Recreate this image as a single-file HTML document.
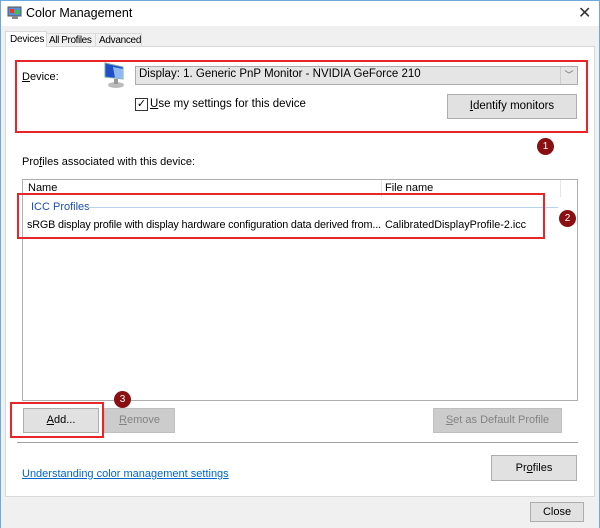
<!DOCTYPE html>
<html><head><style>
*{box-sizing:border-box;margin:0;padding:0}
body{width:600px;height:528px;position:relative;background:#f0f0f0;font-family:"Liberation Sans",sans-serif;font-size:11px;color:#000;overflow:hidden}
.a{position:absolute;white-space:nowrap}
.btn{position:absolute;background:#e1e1e1;border:1px solid #adadad;text-align:center;line-height:22px}
.dis{background:#cccccc;border-color:#bfbfbf;color:#838383}
.red{position:absolute;border:2px solid #e8262a}
.badge{position:absolute;width:17px;height:17px;border-radius:50%;background:#8a0f12;color:#fff;font-size:10px;text-align:center;line-height:17px}
u{text-decoration:underline}
</style></head><body>
<div class="a" style="left:0;top:0;width:600px;height:528px;border:1px solid #6fa8dc;border-bottom:none"></div>
<div class="a" style="left:1px;top:1px;width:598px;height:25px;background:#fff"></div>
<svg class="a" style="left:7px;top:6px" width="16" height="14"><rect x="1" y="1" width="13" height="9" fill="#5a8fd6" stroke="#555"/><rect x="3" y="3" width="4" height="4" fill="#e33"/><rect x="8" y="4" width="4" height="4" fill="#3c3"/><rect x="5" y="10" width="6" height="3" fill="#888"/></svg>
<div class="a" style="left:26px;top:6px;font-size:12.5px">Color Management</div>
<div class="a" style="left:578px;top:3px;font-size:16px;color:#333">✕</div>
<!-- tabs -->
<div class="a" style="left:5px;top:31px;width:42px;height:16px;background:#fff;border:1px solid #d9d9d9;border-bottom:none"></div>
<div class="a" style="left:10px;top:34px;font-size:10px;letter-spacing:-0.2px">Devices</div>
<div class="a" style="left:46px;top:33px;width:50px;height:14px;border:1px solid #d9d9d9;border-bottom:none"></div>
<div class="a" style="left:49px;top:35px;font-size:10px;letter-spacing:-0.4px">All Profiles</div>
<div class="a" style="left:95px;top:33px;width:47px;height:14px;border:1px solid #d9d9d9;border-bottom:none"></div>
<div class="a" style="left:99px;top:35px;font-size:10px;letter-spacing:-0.3px">Advanced</div>
<div class="a" style="left:5px;top:46px;width:590px;height:451px;background:#fff;border:1px solid #d9d9d9"></div>
<div class="a" style="left:6px;top:46px;width:40px;height:2px;background:#fff"></div>

<div class="red" style="left:15px;top:60px;width:573px;height:73px"></div>
<div class="a" style="left:22px;top:71px"><u>D</u>evice:</div>
<svg class="a" style="left:103px;top:61px" width="24" height="28"><polygon points="2,2 20,6 20,18 2,16" fill="#1e50c8" stroke="#7aa" /><polygon points="10,6 20,8 20,18 12,17" fill="#8fb8f0"/><ellipse cx="13" cy="24" rx="8" ry="3" fill="#bbb"/><rect x="11" y="18" width="4" height="5" fill="#999"/></svg>
<div class="a" style="left:135px;top:66px;width:443px;height:19px;background:#e5e5e5;border:1px solid #acacac"></div>
<div class="a" style="left:139px;top:68px;font-size:11.5px">Display: 1. Generic PnP Monitor - NVIDIA GeForce 210</div>
<div class="a" style="left:560px;top:67px;width:17px;height:17px;border-left:1px solid #ccc;text-align:center;color:#666;font-size:9px;line-height:17px">﹀</div>
<div class="a" style="left:135px;top:98px;width:13px;height:13px;border:1px solid #333;background:#fff;font-size:11px;line-height:11px;text-align:center">✓</div>
<div class="a" style="left:150px;top:98px;font-size:11.5px"><u>U</u>se my settings for this device</div>
<div class="btn" style="left:447px;top:94px;width:130px;height:25px;line-height:23px;font-size:11.5px"><u>I</u>dentify monitors</div>
<div class="badge" style="left:537px;top:138px">1</div>

<div class="a" style="left:22px;top:156px">Pro<u>f</u>iles associated with this device:</div>
<div class="a" style="left:22px;top:179px;width:556px;height:222px;border:1px solid #adadad;background:#fff"></div>
<div class="a" style="left:381px;top:180px;width:1px;height:17px;background:#e5e5e5"></div>
<div class="a" style="left:560px;top:180px;width:1px;height:17px;background:#e5e5e5"></div>
<div class="a" style="left:28px;top:182px">Name</div>
<div class="a" style="left:385px;top:182px">File name</div>
<div class="a" style="left:31px;top:201px;color:#1e4db4">ICC Profiles</div>
<div class="a" style="left:88px;top:207px;width:470px;height:1px;background:#b8d3f0"></div>
<div class="a" style="left:27px;top:219px;font-size:10.8px;letter-spacing:-0.15px">sRGB display profile with display hardware configuration data derived from...</div>
<div class="a" style="left:385px;top:219px;font-size:10.8px">CalibratedDisplayProfile-2.icc</div>
<div class="red" style="left:17px;top:193px;width:528px;height:46px"></div>
<div class="badge" style="left:559px;top:210px">2</div>

<div class="badge" style="left:114px;top:391px">3</div>
<div class="red" style="left:10px;top:402px;width:94px;height:36px"></div>
<div class="btn" style="left:23px;top:408px;width:76px;height:25px"><u>A</u>dd...</div>
<div class="btn dis" style="left:104px;top:408px;width:71px;height:25px"><u>R</u>emove</div>
<div class="btn dis" style="left:433px;top:408px;width:129px;height:25px"><u>S</u>et as Default Profile</div>
<div class="a" style="left:17px;top:442px;width:561px;height:1px;background:#a0a0a0"></div>
<div class="a" style="left:22px;top:468px;color:#0066cc;text-decoration:underline">Understanding color management settings</div>
<div class="btn" style="left:491px;top:455px;width:86px;height:26px;line-height:24px">Pr<u>o</u>files</div>
<div class="btn" style="left:530px;top:502px;width:54px;height:20px;line-height:18px">Close</div>
</body></html>
